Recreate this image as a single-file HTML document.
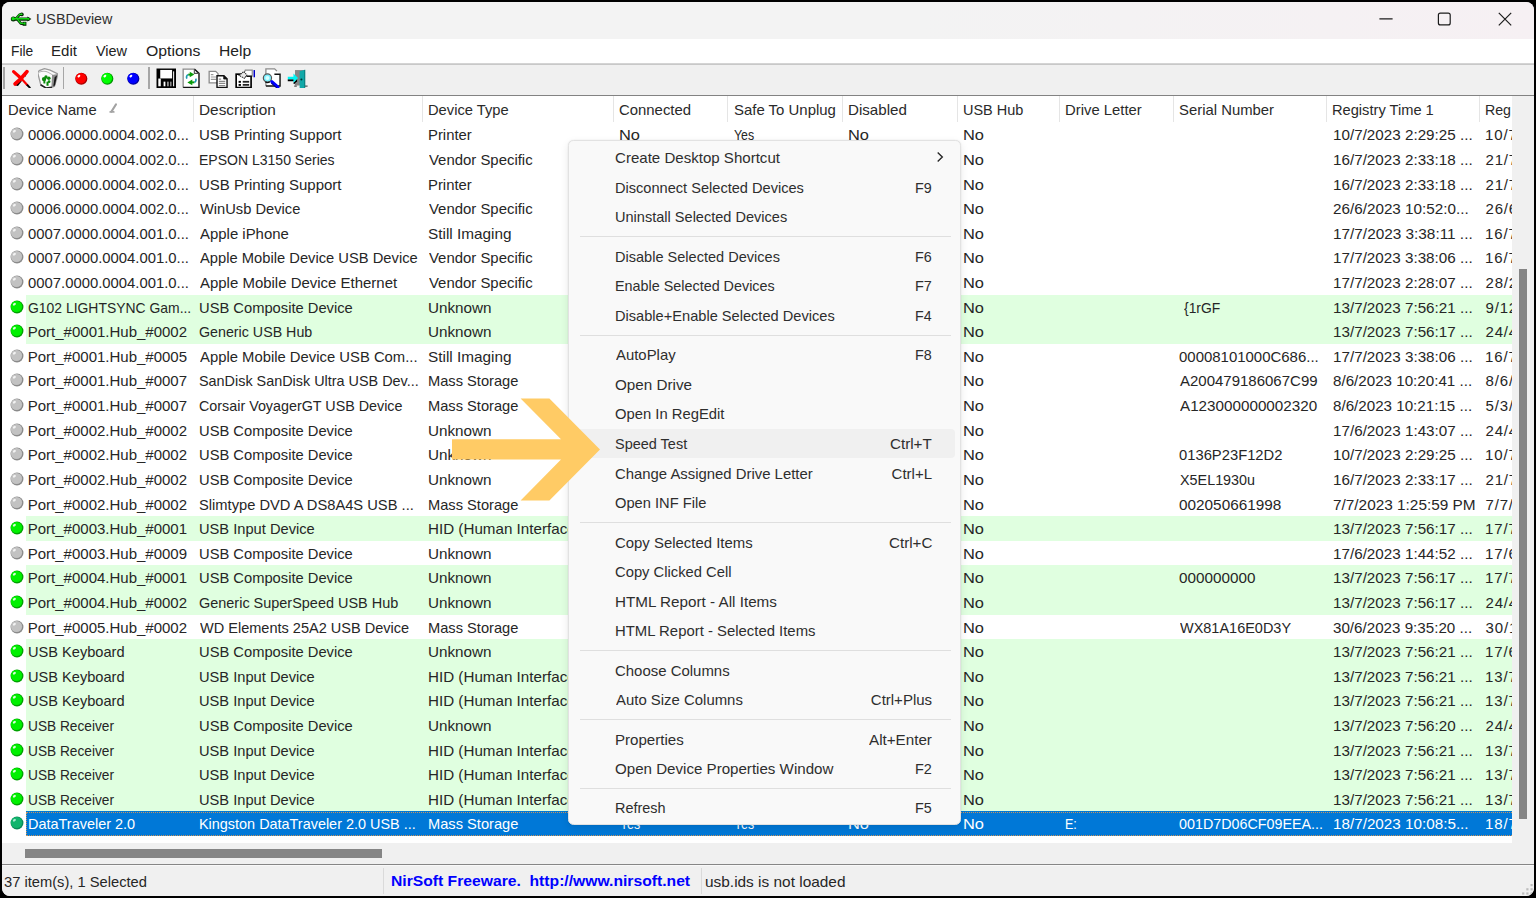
<!DOCTYPE html>
<html lang="en"><head><meta charset="utf-8"><title>USBDeview</title>
<style>
*{box-sizing:border-box;margin:0;padding:0}
html,body{width:1536px;height:898px;overflow:hidden;background:#000}
body{font-family:"Liberation Sans",sans-serif;font-size:15px;color:#262626;position:relative}
#win{position:absolute;left:1.8px;top:1.8px;width:1532.6px;height:894.3px;border-radius:8px;background:#f0f0f0;overflow:hidden}
#o{position:absolute;left:-1.8px;top:-1.8px;width:1536px;height:898px}
#o div,#o svg{position:absolute}
.t{line-height:18px;white-space:pre;transform-origin:0 0}
#title{left:0;top:0;width:1536px;height:38.8px;background:linear-gradient(90deg,#f3f3f3 0%,#f3f3f3 60%,#f6f0f3 100%);border-top:1.2px solid #fbfbfb}
#menubar{left:0;top:38.8px;width:1536px;height:24.6px;background:#fff}
#tbtop{left:0;top:63.2px;width:1536px;height:1.8px;background:linear-gradient(#dadada,#c2c2c2)}
#toolbar{left:0;top:65px;width:1536px;height:29.6px;background:#f0f0f0}
#tbbot{left:0;top:94.6px;width:1536px;height:1.6px;background:#828282}
.tsep{top:67.2px;width:1.6px;height:21.4px;background:#a6a6a6}
#list{left:2px;top:96.2px;width:1510px;height:746.5px;background:#fff;overflow:hidden}
#lo{left:-2px;top:-96.2px;width:1536px;height:898px}
.hs{top:96.2px;width:1px;height:26px;background:#e5e5e5}
.bg{left:26.3px;width:1486px;height:24.61px}
.g{background:#e0ffe0}
.s{background:#0078d7}
.w{color:#fff}
.dot{left:9.5px;width:14px;height:14px}
#vs{left:1512px;top:96.2px;width:22.4px;height:746.5px;background:#f0f0f0}
#vt{left:1518.8px;top:269.3px;width:8.7px;height:549.6px;background:#858585}
#hsb{left:0;top:842.7px;width:1536px;height:21.5px;background:#f0f0f0}
#ht{left:24.8px;top:848.7px;width:357.6px;height:9px;background:#858585}
#stl{left:0;top:864.1px;width:1536px;height:1.3px;background:#868686}
#status{left:0;top:865.4px;width:1536px;height:32px;background:#f0f0f0;border-top:1px solid #f9f9f9}
.sb{top:867.5px;width:1px;height:26.5px;background:#dadada}
#menu{left:568.2px;top:139.9px;width:393.2px;height:685px;background:#f9f9f9;border:1.4px solid #e2e2e2;border-radius:5.5px;box-shadow:0 3px 8px rgba(0,0,0,.09),0 0 1.5px rgba(0,0,0,.10)}
.ms{left:579.5px;width:371.5px;height:1px;background:#dfdfdf}
#hl{left:575px;top:428.9px;width:380.3px;height:29.3px;border-radius:4px;background:#f0f0f0}
.m{color:#2e2e2e}
</style></head><body>
<div id="win"><div id="o">

<div id="title"></div>
<svg style="left:10px;top:11px" width="22" height="16" viewBox="10 11 22 16"><g fill="none" stroke="#042a04" stroke-linecap="round" stroke-linejoin="round"><path d="M13 19.1H28.5" stroke-width="3.3"/><path d="M16 18.6L19.6 14.6H21.4" stroke-width="2.6"/><path d="M17.6 19.6L21 23.7H23.4" stroke-width="2.6"/></g><circle cx="13.3" cy="19" r="2.5" fill="#042a04"/><circle cx="21.8" cy="14.4" r="1.9" fill="#042a04"/><rect x="22.6" y="21.8" width="3.8" height="4" fill="#042a04"/><path d="M27.4 16.6L31.4 19L27.4 21.4Z" fill="#042a04"/><g fill="none" stroke="#12d812" stroke-linecap="round" stroke-linejoin="round"><path d="M13 18.8H28" stroke-width="1.5"/><path d="M16 18.4L19.6 14.4H21.2" stroke-width="1.2"/><path d="M17.6 19.4L21 23.5H23.2" stroke-width="1.2"/></g><circle cx="13.1" cy="18.7" r="1.6" fill="#12e012"/><circle cx="21.7" cy="14.3" r=".8" fill="#30f030"/><rect x="23.6" y="22.4" width="2" height="2.2" fill="#12d812"/><path d="M27.8 17.8L30.2 18.9L27.8 20Z" fill="#12e012"/></svg>
<div class="t" style="left:35.50px;top:10.10px;transform:scaleX(0.9544);color:#303030;">USBDeview</div>
<svg style="left:1370px;top:6px" width="150" height="26" viewBox="1370 6 150 26"><g fill="none" stroke="#1c1c1c" stroke-width="1.2"><path d="M1379.4 18.8H1392.6"/><rect x="1438.4" y="13.1" width="11.8" height="11.8" rx="2"/><path d="M1498.8 12.9L1511.2 25.3M1511.2 12.9L1498.8 25.3"/></g></svg>
<div id="menubar"></div>
<div class="t" style="left:10.95px;top:42.00px;transform:scaleX(0.9193);color:#222;">File</div>
<div class="t" style="left:51.45px;top:42.00px;transform:scaleX(1.0041);color:#222;">Edit</div>
<div class="t" style="left:96.25px;top:42.00px;transform:scaleX(0.9627);color:#222;">View</div>
<div class="t" style="left:146.11px;top:42.00px;transform:scaleX(1.0515);color:#222;">Options</div>
<div class="t" style="left:218.80px;top:42.00px;transform:scaleX(1.0448);color:#222;">Help</div>
<div id="tbtop"></div><div id="toolbar"></div><div id="tbbot"></div>
<div class="tsep" style="left:3.2px"></div>
<div class="tsep" style="left:62.8px"></div>
<div class="tsep" style="left:148.2px"></div>
<svg style="left:11.4px;top:67.6px" width="20.6" height="20.6" viewBox="0 0 16 16"><path d="M6.4 9.2L3 13.4L5.4 14L8.6 10Z" fill="#000"/><path d="M12.6 3L10.4 6L11.4 6.8Z" fill="#000"/><path d="M2 2.8L8.2 8.4" stroke="#ff0000" stroke-width="2.5" fill="none" stroke-linecap="round"/><path d="M8.2 8.4L12.6 13.2" stroke="#ff0000" stroke-width="1.7" fill="none" stroke-linecap="round"/><path d="M12.4 2.8L7.6 8.4L3.2 12.4" stroke="#ff0000" stroke-width="2.9" fill="none" stroke-linecap="round" stroke-linejoin="round"/><path d="M12.8 13.4L14.6 15.2" stroke="#000" stroke-width="1.5" stroke-linecap="round"/></svg><svg style="left:37.7px;top:67.6px" width="20.6" height="20.6" viewBox="0 0 16 16"><path d="M-.2 3.6L1 2L5 .5L9.4 1.6L15.4 4.6L14.6 8L12.8 14.2L10.6 15L6.4 15.7L2.2 13.2L.6 7Z" fill="#fcfcfc" stroke="#9a9a9a" stroke-width="1"/><path d="M.4 3.4Q5 1.6 8 3.4T11.4 5.4" fill="none" stroke="#b4b4b4" stroke-width=".8"/><path d="M10.9 5.4L15.3 4.7L12.9 14.2L10.4 15.1Z" fill="#8e8e8e"/><path d="M12.9 7.2L14.8 5.6L13.2 13.4L11.9 14.4Z" fill="#161616"/><path d="M2 13L6.4 15.6L10.8 14.9" fill="none" stroke="#222" stroke-width="1.2"/><g fill="#0c8c0c"><circle cx="4.7" cy="8.6" r="1.7"/><circle cx="6.2" cy="7" r="1.3"/><circle cx="8.4" cy="8" r="1.4"/><circle cx="8.6" cy="10.6" r="1.1"/><path d="M4.2 9.4H5.7V12H4.2Z"/><path d="M6.6 10.6H8.2V13.8H6.6Z"/></g></svg><svg style="left:70.9px;top:67.6px" width="20.6" height="20.6" viewBox="0 0 16 16"><g transform="translate(2.9 3.2) scale(.73)"><circle cx="7" cy="7" r="6.45" fill="#a80000"/><circle cx="6.5" cy="6.5" r="5.6" fill="#ff0000"/><ellipse cx="4.4" cy="4.2" rx="1.7" ry="1.15" transform="rotate(-38 4.4 4.2)" fill="#ffffff"/></g></svg><svg style="left:97.1px;top:67.6px" width="20.6" height="20.6" viewBox="0 0 16 16"><g transform="translate(2.9 3.2) scale(.73)"><circle cx="7" cy="7" r="6.45" fill="#009800"/><circle cx="6.5" cy="6.5" r="5.6" fill="#00ff00"/><ellipse cx="4.4" cy="4.2" rx="1.7" ry="1.15" transform="rotate(-38 4.4 4.2)" fill="#ffffff"/></g></svg><svg style="left:123.4px;top:67.6px" width="20.6" height="20.6" viewBox="0 0 16 16"><g transform="translate(2.9 3.2) scale(.73)"><circle cx="7" cy="7" r="6.45" fill="#0000a0"/><circle cx="6.5" cy="6.5" r="5.6" fill="#0000ff"/><ellipse cx="4.4" cy="4.2" rx="1.7" ry="1.15" transform="rotate(-38 4.4 4.2)" fill="#ffffff"/></g></svg><svg style="left:155.8px;top:67.6px" width="20.6" height="20.6" viewBox="0 0 16 16"><rect x=".4" y=".4" width="15.2" height="15.2" fill="#000"/><rect x="3.3" y="1.5" width="9.2" height="6.6" fill="#fff"/><rect x="1.8" y="8.2" width="1.9" height="6" fill="#fff"/><rect x="1.8" y="1.8" width=".9" height="6" fill="#fff" opacity=".0"/><rect x="13.3" y="2.6" width=".8" height="11.6" fill="#fff"/><rect x="5.9" y="10.6" width="1.4" height="3.6" fill="#fff"/><rect x="8.6" y="10.6" width="1.3" height="3.6" fill="#9a9a9a"/><rect x="10.9" y="10.6" width="1.2" height="3.6" fill="#8a8a8a"/></svg><svg style="left:182.1px;top:67.6px" width="20.6" height="20.6" viewBox="0 0 16 16"><path d="M.9.8H9.6L13.2 4.2V15.2H.9Z" fill="#fff"/><path d="M.9 15.2V.8H9.6" fill="none" stroke="#8a8a8a" stroke-width="1"/><path d="M9.6.8L13.2 4.2V15.2H.9" fill="none" stroke="#111" stroke-width="1.1"/><path d="M9.6 1V4.2H13" fill="none" stroke="#555" stroke-width=".9"/><path d="M6 3V7.2L9.6 5.1Z" fill="#0a9a0a"/><rect x="4.8" y="4.4" width="1.8" height="1.5" fill="#0a9a0a"/><path d="M8 9V13.4L4.2 11.2Z" fill="#0a9a0a"/><rect x="7.8" y="10.4" width="1.8" height="1.5" fill="#0a9a0a"/><path d="M4.8 5.2C3.6 5.6 3.2 7 3.8 8.2" fill="none" stroke="#1a9ab0" stroke-width="1.3"/><path d="M9.6 11.2C10.8 10.8 11.2 9.4 10.6 8.2" fill="none" stroke="#1a9ab0" stroke-width="1.3"/></svg><svg style="left:208.4px;top:67.6px" width="20.6" height="20.6" viewBox="0 0 16 16"><path d="M.9 2.6H6L7.8 4.4V11.6H.9Z" fill="#fff" stroke="#8a8a8a" stroke-width="1"/><path d="M2.2 5.2H4.2M2.2 7H6.4M2.2 8.8H6.4" stroke="#9a9a9a" stroke-width=".9"/><path d="M7 6H12.4L14.8 8.4V15.2H7Z" fill="#fff" stroke="#111" stroke-width="1.1"/><path d="M12.2 6V8.6H14.8" fill="#111" stroke="#111" stroke-width=".6"/><path d="M8.4 8.6H10.2M8.4 10.4H13.4M8.4 12H13.4M8.4 13.6H13.4" stroke="#8a8a8a" stroke-width=".9"/></svg><svg style="left:234.7px;top:67.6px" width="20.6" height="20.6" viewBox="0 0 16 16"><rect x=".9" y="4.8" width="11.6" height="10.4" fill="#fff" stroke="#000" stroke-width="1.3"/><path d="M8 1.6H13.4V6.4H9L7 4.4Z" fill="#fff" stroke="#8a8a8a" stroke-width=".9"/><path d="M3.2 5.8L6.8 2.8L9.2 5.4L7.4 8Z" fill="#e8e8e8" stroke="#222" stroke-width=".8" stroke-dasharray="1 .6"/><path d="M9 6.4H13.2" stroke="#111" stroke-width="1"/><rect x="14.4" y="1.6" width="1.2" height="5.6" fill="#0000c8"/><rect x="2.8" y="10" width="1.8" height="1.5" fill="#000"/><rect x="2.8" y="12.4" width="1.8" height="1.5" fill="#000"/><rect x="6" y="10" width="5" height="1.4" fill="#222"/><rect x="6" y="12.4" width="5" height="1.4" fill="#222"/></svg><svg style="left:261.0px;top:67.6px" width="20.6" height="20.6" viewBox="0 0 16 16"><path d="M3.8.6H10.6L14.8 4.6V14H3.8Z" fill="#fff"/><path d="M3.8 14V.6H10.6L12.4 2.4" fill="none" stroke="#8a8a8a" stroke-width="1"/><path d="M10.4 4.8H14.8V14H3.8" fill="none" stroke="#111" stroke-width="1.1"/><circle cx="5" cy="7.8" r="3.2" fill="#7af0ff" stroke="#555" stroke-width=".9"/><circle cx="5" cy="7.8" r="1.6" fill="#d8ffff"/><path d="M3.4 10.8Q5 11.8 6.8 10.8" fill="none" stroke="#111" stroke-width="1"/><path d="M8.4 10.6L13.2 14.8" stroke="#0000ff" stroke-width="2.4" stroke-linecap="round"/><path d="M8 11.8L12.4 15.6" stroke="#000080" stroke-width=".8"/></svg><svg style="left:287.3px;top:67.6px" width="20.6" height="20.6" viewBox="0 0 16 16"><rect x="6.2" y="1.6" width="7.4" height="12" fill="#868686"/><path d="M5.6 14H7.6M12.8 14H16" stroke="#555" stroke-width="1"/><path d="M9.8 2.6L14 1.4V15.6L9.8 15.6Z" fill="#11a8a8"/><path d="M13.4 1.6L14.2 1.4V15.4L13.4 15.4Z" fill="#0a7a7a"/><circle cx="11.2" cy="9" r=".8" fill="#033"/><path d="M.6 8.8H6V10.2H.6Z" fill="#000"/><path d="M4.8 11.6L7.8 8.6V10.2L5.6 12.6Z" fill="#000"/><path d="M.6 6.8H5V4.2L8.6 7.8L5 11.4V8.8H.6Z" fill="#00f4f4"/></svg>
<div id="list"><div id="lo">
<div class="t" style="left:7.77px;top:101.00px;transform:scaleX(0.9841);color:#2a2a2a;">Device Name</div>
<div class="t" style="left:198.82px;top:101.00px;transform:scaleX(1.0247);color:#2a2a2a;">Description</div>
<div class="hs" style="left:192.6px"></div>
<div class="t" style="left:427.77px;top:101.00px;transform:scaleX(0.9801);color:#2a2a2a;">Device Type</div>
<div class="hs" style="left:421.7px"></div>
<div class="t" style="left:619.35px;top:101.00px;transform:scaleX(0.9929);color:#2a2a2a;">Connected</div>
<div class="hs" style="left:613.2px"></div>
<div class="t" style="left:733.85px;top:101.00px;transform:scaleX(0.9960);color:#2a2a2a;">Safe To Unplug</div>
<div class="hs" style="left:726.7px"></div>
<div class="t" style="left:848.34px;top:101.00px;transform:scaleX(1.0089);color:#2a2a2a;">Disabled</div>
<div class="hs" style="left:842.4px"></div>
<div class="t" style="left:963.09px;top:101.00px;transform:scaleX(0.9655);color:#2a2a2a;">USB Hub</div>
<div class="hs" style="left:957.0px"></div>
<div class="t" style="left:1064.66px;top:101.00px;transform:scaleX(0.9895);color:#2a2a2a;">Drive Letter</div>
<div class="hs" style="left:1058.7px"></div>
<div class="t" style="left:1179.26px;top:101.00px;transform:scaleX(0.9916);color:#2a2a2a;">Serial Number</div>
<div class="hs" style="left:1173.2px"></div>
<div class="t" style="left:1332.28px;top:101.00px;transform:scaleX(0.9765);color:#2a2a2a;">Registry Time 1</div>
<div class="hs" style="left:1325.8px"></div>
<div class="t" style="left:1484.82px;top:101.00px;transform:scaleX(0.9449);color:#2a2a2a;">Reg</div>
<div class="hs" style="left:1479.0px"></div>
<svg style="left:108px;top:102px" width="12" height="13" viewBox="108 102 12 13"><path d="M116 104.4L111.4 111.6" stroke="#a2a2a2" stroke-width="2" fill="none" stroke-linecap="round"/><path d="M110.2 111.9H113.8" stroke="#a4a4a4" stroke-width="1.7" fill="none" stroke-linecap="round"/></svg>
<svg class="dot" style="top:127.30px" viewBox="0 0 14 14"><circle cx="7" cy="7" r="6.45" fill="#8a8a8a"/><circle cx="6.5" cy="6.5" r="5.6" fill="#c2c2c2"/><ellipse cx="4.4" cy="4.2" rx="1.7" ry="1.15" transform="rotate(-38 4.4 4.2)" fill="#f2f2f2"/></svg>
<div class="t" style="left:28.36px;top:126.35px;transform:scaleX(0.9894);">0006.0000.0004.002.0...</div>
<div class="t" style="left:198.95px;top:126.35px;">USB Printing Support</div>
<div class="t" style="left:427.76px;top:126.35px;transform:scaleX(0.9907);">Printer</div>
<div class="t" style="left:618.74px;top:126.35px;transform:scaleX(1.0925);">No</div>
<div class="t" style="left:734.30px;top:126.35px;transform:scaleX(0.8228);">Yes</div>
<div class="t" style="left:848.24px;top:126.35px;transform:scaleX(1.0925);">No</div>
<div class="t" style="left:962.84px;top:126.35px;transform:scaleX(1.0925);">No</div>
<div class="t" style="left:1332.53px;top:126.35px;transform:scaleX(1.0148);">10/7/2023 2:29:25 ...</div>
<div class="t" style="left:1485.05px;top:126.35px;letter-spacing:.85px;">10/7/2</div>
<svg class="dot" style="top:151.91px" viewBox="0 0 14 14"><circle cx="7" cy="7" r="6.45" fill="#8a8a8a"/><circle cx="6.5" cy="6.5" r="5.6" fill="#c2c2c2"/><ellipse cx="4.4" cy="4.2" rx="1.7" ry="1.15" transform="rotate(-38 4.4 4.2)" fill="#f2f2f2"/></svg>
<div class="t" style="left:28.36px;top:150.96px;transform:scaleX(0.9894);">0006.0000.0004.002.0...</div>
<div class="t" style="left:198.93px;top:150.96px;transform:scaleX(0.9344);">EPSON L3150 Series</div>
<div class="t" style="left:428.85px;top:150.96px;transform:scaleX(0.9942);">Vendor Specific</div>
<div class="t" style="left:618.74px;top:150.96px;transform:scaleX(1.0925);">No</div>
<div class="t" style="left:734.30px;top:150.96px;transform:scaleX(0.8228);">Yes</div>
<div class="t" style="left:848.24px;top:150.96px;transform:scaleX(1.0925);">No</div>
<div class="t" style="left:962.84px;top:150.96px;transform:scaleX(1.0925);">No</div>
<div class="t" style="left:1332.53px;top:150.96px;transform:scaleX(1.0148);">16/7/2023 2:33:18 ...</div>
<div class="t" style="left:1485.45px;top:150.96px;letter-spacing:.85px;">21/7/2</div>
<svg class="dot" style="top:176.52px" viewBox="0 0 14 14"><circle cx="7" cy="7" r="6.45" fill="#8a8a8a"/><circle cx="6.5" cy="6.5" r="5.6" fill="#c2c2c2"/><ellipse cx="4.4" cy="4.2" rx="1.7" ry="1.15" transform="rotate(-38 4.4 4.2)" fill="#f2f2f2"/></svg>
<div class="t" style="left:28.36px;top:175.57px;transform:scaleX(0.9894);">0006.0000.0004.002.0...</div>
<div class="t" style="left:198.95px;top:175.57px;">USB Printing Support</div>
<div class="t" style="left:427.76px;top:175.57px;transform:scaleX(0.9907);">Printer</div>
<div class="t" style="left:618.74px;top:175.57px;transform:scaleX(1.0925);">No</div>
<div class="t" style="left:734.30px;top:175.57px;transform:scaleX(0.8228);">Yes</div>
<div class="t" style="left:848.24px;top:175.57px;transform:scaleX(1.0925);">No</div>
<div class="t" style="left:962.84px;top:175.57px;transform:scaleX(1.0925);">No</div>
<div class="t" style="left:1332.53px;top:175.57px;transform:scaleX(1.0148);">16/7/2023 2:33:18 ...</div>
<div class="t" style="left:1485.45px;top:175.57px;letter-spacing:.85px;">21/7/2</div>
<svg class="dot" style="top:201.13px" viewBox="0 0 14 14"><circle cx="7" cy="7" r="6.45" fill="#8a8a8a"/><circle cx="6.5" cy="6.5" r="5.6" fill="#c2c2c2"/><ellipse cx="4.4" cy="4.2" rx="1.7" ry="1.15" transform="rotate(-38 4.4 4.2)" fill="#f2f2f2"/></svg>
<div class="t" style="left:28.36px;top:200.18px;transform:scaleX(0.9894);">0006.0000.0004.002.0...</div>
<div class="t" style="left:199.95px;top:200.18px;transform:scaleX(0.9784);">WinUsb Device</div>
<div class="t" style="left:428.85px;top:200.18px;transform:scaleX(0.9942);">Vendor Specific</div>
<div class="t" style="left:618.74px;top:200.18px;transform:scaleX(1.0925);">No</div>
<div class="t" style="left:734.30px;top:200.18px;transform:scaleX(0.8228);">Yes</div>
<div class="t" style="left:848.24px;top:200.18px;transform:scaleX(1.0925);">No</div>
<div class="t" style="left:962.84px;top:200.18px;transform:scaleX(1.0925);">No</div>
<div class="t" style="left:1332.94px;top:200.18px;transform:scaleX(1.0167);">26/6/2023 10:52:0...</div>
<div class="t" style="left:1485.45px;top:200.18px;letter-spacing:.85px;">26/6/2</div>
<svg class="dot" style="top:225.74px" viewBox="0 0 14 14"><circle cx="7" cy="7" r="6.45" fill="#8a8a8a"/><circle cx="6.5" cy="6.5" r="5.6" fill="#c2c2c2"/><ellipse cx="4.4" cy="4.2" rx="1.7" ry="1.15" transform="rotate(-38 4.4 4.2)" fill="#f2f2f2"/></svg>
<div class="t" style="left:28.36px;top:224.79px;transform:scaleX(0.9894);">0007.0000.0004.001.0...</div>
<div class="t" style="left:200.05px;top:224.79px;transform:scaleX(0.9955);">Apple iPhone</div>
<div class="t" style="left:428.23px;top:224.79px;transform:scaleX(1.0225);">Still Imaging</div>
<div class="t" style="left:618.74px;top:224.79px;transform:scaleX(1.0925);">No</div>
<div class="t" style="left:734.30px;top:224.79px;transform:scaleX(0.8228);">Yes</div>
<div class="t" style="left:848.24px;top:224.79px;transform:scaleX(1.0925);">No</div>
<div class="t" style="left:962.84px;top:224.79px;transform:scaleX(1.0925);">No</div>
<div class="t" style="left:1332.52px;top:224.79px;transform:scaleX(1.0231);">17/7/2023 3:38:11 ...</div>
<div class="t" style="left:1485.05px;top:224.79px;letter-spacing:.85px;">16/7/2</div>
<svg class="dot" style="top:250.35px" viewBox="0 0 14 14"><circle cx="7" cy="7" r="6.45" fill="#8a8a8a"/><circle cx="6.5" cy="6.5" r="5.6" fill="#c2c2c2"/><ellipse cx="4.4" cy="4.2" rx="1.7" ry="1.15" transform="rotate(-38 4.4 4.2)" fill="#f2f2f2"/></svg>
<div class="t" style="left:28.36px;top:249.40px;transform:scaleX(0.9894);">0007.0000.0004.001.0...</div>
<div class="t" style="left:200.05px;top:249.40px;transform:scaleX(0.9819);">Apple Mobile Device USB Device</div>
<div class="t" style="left:428.85px;top:249.40px;transform:scaleX(0.9942);">Vendor Specific</div>
<div class="t" style="left:618.74px;top:249.40px;transform:scaleX(1.0925);">No</div>
<div class="t" style="left:734.30px;top:249.40px;transform:scaleX(0.8228);">Yes</div>
<div class="t" style="left:848.24px;top:249.40px;transform:scaleX(1.0925);">No</div>
<div class="t" style="left:962.84px;top:249.40px;transform:scaleX(1.0925);">No</div>
<div class="t" style="left:1332.53px;top:249.40px;transform:scaleX(1.0148);">17/7/2023 3:38:06 ...</div>
<div class="t" style="left:1485.05px;top:249.40px;letter-spacing:.85px;">16/7/2</div>
<svg class="dot" style="top:274.96px" viewBox="0 0 14 14"><circle cx="7" cy="7" r="6.45" fill="#8a8a8a"/><circle cx="6.5" cy="6.5" r="5.6" fill="#c2c2c2"/><ellipse cx="4.4" cy="4.2" rx="1.7" ry="1.15" transform="rotate(-38 4.4 4.2)" fill="#f2f2f2"/></svg>
<div class="t" style="left:28.36px;top:274.01px;transform:scaleX(0.9894);">0007.0000.0004.001.0...</div>
<div class="t" style="left:200.05px;top:274.01px;transform:scaleX(0.9975);">Apple Mobile Device Ethernet</div>
<div class="t" style="left:428.85px;top:274.01px;transform:scaleX(0.9942);">Vendor Specific</div>
<div class="t" style="left:618.74px;top:274.01px;transform:scaleX(1.0925);">No</div>
<div class="t" style="left:734.30px;top:274.01px;transform:scaleX(0.8228);">Yes</div>
<div class="t" style="left:848.24px;top:274.01px;transform:scaleX(1.0925);">No</div>
<div class="t" style="left:962.84px;top:274.01px;transform:scaleX(1.0925);">No</div>
<div class="t" style="left:1332.53px;top:274.01px;transform:scaleX(1.0148);">17/7/2023 2:28:07 ...</div>
<div class="t" style="left:1485.45px;top:274.01px;letter-spacing:.85px;">28/2/2</div>
<div class="bg g" style="top:294.62px"></div>
<svg class="dot" style="top:299.57px" viewBox="0 0 14 14"><circle cx="7" cy="7" r="6.45" fill="#00a000"/><circle cx="6.5" cy="6.5" r="5.6" fill="#00f000"/><ellipse cx="4.4" cy="4.2" rx="1.7" ry="1.15" transform="rotate(-38 4.4 4.2)" fill="#d8ffd8"/></svg>
<div class="t" style="left:28.30px;top:298.62px;transform:scaleX(0.9281);">G102 LIGHTSYNC Gam...</div>
<div class="t" style="left:198.97px;top:298.62px;transform:scaleX(0.9813);">USB Composite Device</div>
<div class="t" style="left:427.83px;top:298.62px;transform:scaleX(1.0165);">Unknown</div>
<div class="t" style="left:619.80px;top:298.62px;transform:scaleX(0.8228);">Yes</div>
<div class="t" style="left:734.30px;top:298.62px;transform:scaleX(0.8228);">Yes</div>
<div class="t" style="left:848.24px;top:298.62px;transform:scaleX(1.0925);">No</div>
<div class="t" style="left:962.84px;top:298.62px;transform:scaleX(1.0925);">No</div>
<div class="t" style="left:1183.67px;top:298.62px;transform:scaleX(0.9245);">{1rGF</div>
<div class="t" style="left:1332.53px;top:298.62px;transform:scaleX(1.0148);">13/7/2023 7:56:21 ...</div>
<div class="t" style="left:1485.45px;top:298.62px;letter-spacing:.85px;">9/12/2</div>
<div class="bg g" style="top:319.23px"></div>
<svg class="dot" style="top:324.18px" viewBox="0 0 14 14"><circle cx="7" cy="7" r="6.45" fill="#00a000"/><circle cx="6.5" cy="6.5" r="5.6" fill="#00f000"/><ellipse cx="4.4" cy="4.2" rx="1.7" ry="1.15" transform="rotate(-38 4.4 4.2)" fill="#d8ffd8"/></svg>
<div class="t" style="left:27.75px;top:323.23px;">Port_#0001.Hub_#0002</div>
<div class="t" style="left:199.39px;top:323.23px;transform:scaleX(0.9500);">Generic USB Hub</div>
<div class="t" style="left:427.83px;top:323.23px;transform:scaleX(1.0165);">Unknown</div>
<div class="t" style="left:619.80px;top:323.23px;transform:scaleX(0.8228);">Yes</div>
<div class="t" style="left:734.30px;top:323.23px;transform:scaleX(0.8228);">Yes</div>
<div class="t" style="left:848.24px;top:323.23px;transform:scaleX(1.0925);">No</div>
<div class="t" style="left:962.84px;top:323.23px;transform:scaleX(1.0925);">No</div>
<div class="t" style="left:1332.53px;top:323.23px;transform:scaleX(1.0148);">13/7/2023 7:56:17 ...</div>
<div class="t" style="left:1485.45px;top:323.23px;letter-spacing:.85px;">24/4/2</div>
<svg class="dot" style="top:348.79px" viewBox="0 0 14 14"><circle cx="7" cy="7" r="6.45" fill="#8a8a8a"/><circle cx="6.5" cy="6.5" r="5.6" fill="#c2c2c2"/><ellipse cx="4.4" cy="4.2" rx="1.7" ry="1.15" transform="rotate(-38 4.4 4.2)" fill="#f2f2f2"/></svg>
<div class="t" style="left:27.75px;top:347.84px;">Port_#0001.Hub_#0005</div>
<div class="t" style="left:200.05px;top:347.84px;transform:scaleX(0.9886);">Apple Mobile Device USB Com...</div>
<div class="t" style="left:428.23px;top:347.84px;transform:scaleX(1.0225);">Still Imaging</div>
<div class="t" style="left:618.74px;top:347.84px;transform:scaleX(1.0925);">No</div>
<div class="t" style="left:734.30px;top:347.84px;transform:scaleX(0.8228);">Yes</div>
<div class="t" style="left:848.24px;top:347.84px;transform:scaleX(1.0925);">No</div>
<div class="t" style="left:962.84px;top:347.84px;transform:scaleX(1.0925);">No</div>
<div class="t" style="left:1179.35px;top:347.84px;transform:scaleX(0.9971);">00008101000C686...</div>
<div class="t" style="left:1332.53px;top:347.84px;transform:scaleX(1.0148);">17/7/2023 3:38:06 ...</div>
<div class="t" style="left:1485.05px;top:347.84px;letter-spacing:.85px;">16/7/2</div>
<svg class="dot" style="top:373.40px" viewBox="0 0 14 14"><circle cx="7" cy="7" r="6.45" fill="#8a8a8a"/><circle cx="6.5" cy="6.5" r="5.6" fill="#c2c2c2"/><ellipse cx="4.4" cy="4.2" rx="1.7" ry="1.15" transform="rotate(-38 4.4 4.2)" fill="#f2f2f2"/></svg>
<div class="t" style="left:27.75px;top:372.45px;">Port_#0001.Hub_#0007</div>
<div class="t" style="left:199.38px;top:372.45px;transform:scaleX(0.9595);">SanDisk SanDisk Ultra USB Dev...</div>
<div class="t" style="left:427.78px;top:372.45px;transform:scaleX(0.9768);">Mass Storage</div>
<div class="t" style="left:618.74px;top:372.45px;transform:scaleX(1.0925);">No</div>
<div class="t" style="left:734.30px;top:372.45px;transform:scaleX(0.8228);">Yes</div>
<div class="t" style="left:848.24px;top:372.45px;transform:scaleX(1.0925);">No</div>
<div class="t" style="left:962.84px;top:372.45px;transform:scaleX(1.0925);">No</div>
<div class="t" style="left:1179.95px;top:372.45px;">A200479186067C99</div>
<div class="t" style="left:1333.04px;top:372.45px;transform:scaleX(1.0111);">8/6/2023 10:20:41 ...</div>
<div class="t" style="left:1485.55px;top:372.45px;letter-spacing:.85px;">8/6/2</div>
<svg class="dot" style="top:398.01px" viewBox="0 0 14 14"><circle cx="7" cy="7" r="6.45" fill="#8a8a8a"/><circle cx="6.5" cy="6.5" r="5.6" fill="#c2c2c2"/><ellipse cx="4.4" cy="4.2" rx="1.7" ry="1.15" transform="rotate(-38 4.4 4.2)" fill="#f2f2f2"/></svg>
<div class="t" style="left:27.75px;top:397.06px;">Port_#0001.Hub_#0007</div>
<div class="t" style="left:199.38px;top:397.06px;transform:scaleX(0.9547);">Corsair VoyagerGT USB Device</div>
<div class="t" style="left:427.78px;top:397.06px;transform:scaleX(0.9768);">Mass Storage</div>
<div class="t" style="left:618.74px;top:397.06px;transform:scaleX(1.0925);">No</div>
<div class="t" style="left:734.30px;top:397.06px;transform:scaleX(0.8228);">Yes</div>
<div class="t" style="left:848.24px;top:397.06px;transform:scaleX(1.0925);">No</div>
<div class="t" style="left:962.84px;top:397.06px;transform:scaleX(1.0925);">No</div>
<div class="t" style="left:1179.95px;top:397.06px;transform:scaleX(1.0149);">A123000000002320</div>
<div class="t" style="left:1333.04px;top:397.06px;transform:scaleX(1.0111);">8/6/2023 10:21:15 ...</div>
<div class="t" style="left:1485.55px;top:397.06px;letter-spacing:.85px;">5/3/2</div>
<svg class="dot" style="top:422.62px" viewBox="0 0 14 14"><circle cx="7" cy="7" r="6.45" fill="#8a8a8a"/><circle cx="6.5" cy="6.5" r="5.6" fill="#c2c2c2"/><ellipse cx="4.4" cy="4.2" rx="1.7" ry="1.15" transform="rotate(-38 4.4 4.2)" fill="#f2f2f2"/></svg>
<div class="t" style="left:27.75px;top:421.67px;">Port_#0002.Hub_#0002</div>
<div class="t" style="left:198.97px;top:421.67px;transform:scaleX(0.9813);">USB Composite Device</div>
<div class="t" style="left:427.83px;top:421.67px;transform:scaleX(1.0165);">Unknown</div>
<div class="t" style="left:618.74px;top:421.67px;transform:scaleX(1.0925);">No</div>
<div class="t" style="left:734.30px;top:421.67px;transform:scaleX(0.8228);">Yes</div>
<div class="t" style="left:848.24px;top:421.67px;transform:scaleX(1.0925);">No</div>
<div class="t" style="left:962.84px;top:421.67px;transform:scaleX(1.0925);">No</div>
<div class="t" style="left:1332.53px;top:421.67px;transform:scaleX(1.0148);">17/6/2023 1:43:07 ...</div>
<div class="t" style="left:1485.45px;top:421.67px;letter-spacing:.85px;">24/4/2</div>
<svg class="dot" style="top:447.23px" viewBox="0 0 14 14"><circle cx="7" cy="7" r="6.45" fill="#8a8a8a"/><circle cx="6.5" cy="6.5" r="5.6" fill="#c2c2c2"/><ellipse cx="4.4" cy="4.2" rx="1.7" ry="1.15" transform="rotate(-38 4.4 4.2)" fill="#f2f2f2"/></svg>
<div class="t" style="left:27.75px;top:446.28px;">Port_#0002.Hub_#0002</div>
<div class="t" style="left:198.97px;top:446.28px;transform:scaleX(0.9813);">USB Composite Device</div>
<div class="t" style="left:427.83px;top:446.28px;transform:scaleX(1.0165);">Unknown</div>
<div class="t" style="left:618.74px;top:446.28px;transform:scaleX(1.0925);">No</div>
<div class="t" style="left:734.30px;top:446.28px;transform:scaleX(0.8228);">Yes</div>
<div class="t" style="left:848.24px;top:446.28px;transform:scaleX(1.0925);">No</div>
<div class="t" style="left:962.84px;top:446.28px;transform:scaleX(1.0925);">No</div>
<div class="t" style="left:1179.36px;top:446.28px;transform:scaleX(0.9846);">0136P23F12D2</div>
<div class="t" style="left:1332.53px;top:446.28px;transform:scaleX(1.0148);">10/7/2023 2:29:25 ...</div>
<div class="t" style="left:1485.05px;top:446.28px;letter-spacing:.85px;">10/7/2</div>
<svg class="dot" style="top:471.84px" viewBox="0 0 14 14"><circle cx="7" cy="7" r="6.45" fill="#8a8a8a"/><circle cx="6.5" cy="6.5" r="5.6" fill="#c2c2c2"/><ellipse cx="4.4" cy="4.2" rx="1.7" ry="1.15" transform="rotate(-38 4.4 4.2)" fill="#f2f2f2"/></svg>
<div class="t" style="left:27.75px;top:470.89px;">Port_#0002.Hub_#0002</div>
<div class="t" style="left:198.97px;top:470.89px;transform:scaleX(0.9813);">USB Composite Device</div>
<div class="t" style="left:427.83px;top:470.89px;transform:scaleX(1.0165);">Unknown</div>
<div class="t" style="left:618.74px;top:470.89px;transform:scaleX(1.0925);">No</div>
<div class="t" style="left:734.30px;top:470.89px;transform:scaleX(0.8228);">Yes</div>
<div class="t" style="left:848.24px;top:470.89px;transform:scaleX(1.0925);">No</div>
<div class="t" style="left:962.84px;top:470.89px;transform:scaleX(1.0925);">No</div>
<div class="t" style="left:1179.66px;top:470.89px;transform:scaleX(0.9573);">X5EL1930u</div>
<div class="t" style="left:1332.53px;top:470.89px;transform:scaleX(1.0148);">16/7/2023 2:33:17 ...</div>
<div class="t" style="left:1485.45px;top:470.89px;letter-spacing:.85px;">21/7/2</div>
<svg class="dot" style="top:496.45px" viewBox="0 0 14 14"><circle cx="7" cy="7" r="6.45" fill="#8a8a8a"/><circle cx="6.5" cy="6.5" r="5.6" fill="#c2c2c2"/><ellipse cx="4.4" cy="4.2" rx="1.7" ry="1.15" transform="rotate(-38 4.4 4.2)" fill="#f2f2f2"/></svg>
<div class="t" style="left:27.75px;top:495.50px;">Port_#0002.Hub_#0002</div>
<div class="t" style="left:199.36px;top:495.50px;transform:scaleX(0.9797);">Slimtype DVD A DS8A4S USB ...</div>
<div class="t" style="left:427.78px;top:495.50px;transform:scaleX(0.9768);">Mass Storage</div>
<div class="t" style="left:618.74px;top:495.50px;transform:scaleX(1.0925);">No</div>
<div class="t" style="left:734.30px;top:495.50px;transform:scaleX(0.8228);">Yes</div>
<div class="t" style="left:848.24px;top:495.50px;transform:scaleX(1.0925);">No</div>
<div class="t" style="left:962.84px;top:495.50px;transform:scaleX(1.0925);">No</div>
<div class="t" style="left:1179.34px;top:495.50px;transform:scaleX(1.0222);">002050661998</div>
<div class="t" style="left:1332.93px;top:495.50px;transform:scaleX(1.0240);">7/7/2023 1:25:59 PM</div>
<div class="t" style="left:1485.45px;top:495.50px;letter-spacing:.85px;">7/7/2</div>
<div class="bg g" style="top:516.11px"></div>
<svg class="dot" style="top:521.06px" viewBox="0 0 14 14"><circle cx="7" cy="7" r="6.45" fill="#00a000"/><circle cx="6.5" cy="6.5" r="5.6" fill="#00f000"/><ellipse cx="4.4" cy="4.2" rx="1.7" ry="1.15" transform="rotate(-38 4.4 4.2)" fill="#d8ffd8"/></svg>
<div class="t" style="left:27.75px;top:520.11px;">Port_#0003.Hub_#0001</div>
<div class="t" style="left:198.97px;top:520.11px;transform:scaleX(0.9777);">USB Input Device</div>
<div class="t" style="left:427.74px;top:520.11px;transform:scaleX(1.0122);">HID (Human Interface...</div>
<div class="t" style="left:619.80px;top:520.11px;transform:scaleX(0.8228);">Yes</div>
<div class="t" style="left:734.30px;top:520.11px;transform:scaleX(0.8228);">Yes</div>
<div class="t" style="left:848.24px;top:520.11px;transform:scaleX(1.0925);">No</div>
<div class="t" style="left:962.84px;top:520.11px;transform:scaleX(1.0925);">No</div>
<div class="t" style="left:1332.53px;top:520.11px;transform:scaleX(1.0148);">13/7/2023 7:56:17 ...</div>
<div class="t" style="left:1485.05px;top:520.11px;letter-spacing:.85px;">17/7/2</div>
<svg class="dot" style="top:545.67px" viewBox="0 0 14 14"><circle cx="7" cy="7" r="6.45" fill="#8a8a8a"/><circle cx="6.5" cy="6.5" r="5.6" fill="#c2c2c2"/><ellipse cx="4.4" cy="4.2" rx="1.7" ry="1.15" transform="rotate(-38 4.4 4.2)" fill="#f2f2f2"/></svg>
<div class="t" style="left:27.75px;top:544.72px;">Port_#0003.Hub_#0009</div>
<div class="t" style="left:198.97px;top:544.72px;transform:scaleX(0.9813);">USB Composite Device</div>
<div class="t" style="left:427.83px;top:544.72px;transform:scaleX(1.0165);">Unknown</div>
<div class="t" style="left:618.74px;top:544.72px;transform:scaleX(1.0925);">No</div>
<div class="t" style="left:734.30px;top:544.72px;transform:scaleX(0.8228);">Yes</div>
<div class="t" style="left:848.24px;top:544.72px;transform:scaleX(1.0925);">No</div>
<div class="t" style="left:962.84px;top:544.72px;transform:scaleX(1.0925);">No</div>
<div class="t" style="left:1332.53px;top:544.72px;transform:scaleX(1.0148);">17/6/2023 1:44:52 ...</div>
<div class="t" style="left:1485.05px;top:544.72px;letter-spacing:.85px;">17/6/2</div>
<div class="bg g" style="top:565.33px"></div>
<svg class="dot" style="top:570.28px" viewBox="0 0 14 14"><circle cx="7" cy="7" r="6.45" fill="#00a000"/><circle cx="6.5" cy="6.5" r="5.6" fill="#00f000"/><ellipse cx="4.4" cy="4.2" rx="1.7" ry="1.15" transform="rotate(-38 4.4 4.2)" fill="#d8ffd8"/></svg>
<div class="t" style="left:27.75px;top:569.33px;">Port_#0004.Hub_#0001</div>
<div class="t" style="left:198.97px;top:569.33px;transform:scaleX(0.9813);">USB Composite Device</div>
<div class="t" style="left:427.83px;top:569.33px;transform:scaleX(1.0165);">Unknown</div>
<div class="t" style="left:619.80px;top:569.33px;transform:scaleX(0.8228);">Yes</div>
<div class="t" style="left:734.30px;top:569.33px;transform:scaleX(0.8228);">Yes</div>
<div class="t" style="left:848.24px;top:569.33px;transform:scaleX(1.0925);">No</div>
<div class="t" style="left:962.84px;top:569.33px;transform:scaleX(1.0925);">No</div>
<div class="t" style="left:1179.34px;top:569.33px;transform:scaleX(1.0176);">000000000</div>
<div class="t" style="left:1332.53px;top:569.33px;transform:scaleX(1.0148);">13/7/2023 7:56:17 ...</div>
<div class="t" style="left:1485.05px;top:569.33px;letter-spacing:.85px;">17/7/2</div>
<div class="bg g" style="top:589.94px"></div>
<svg class="dot" style="top:594.89px" viewBox="0 0 14 14"><circle cx="7" cy="7" r="6.45" fill="#00a000"/><circle cx="6.5" cy="6.5" r="5.6" fill="#00f000"/><ellipse cx="4.4" cy="4.2" rx="1.7" ry="1.15" transform="rotate(-38 4.4 4.2)" fill="#d8ffd8"/></svg>
<div class="t" style="left:27.75px;top:593.94px;">Port_#0004.Hub_#0002</div>
<div class="t" style="left:199.38px;top:593.94px;transform:scaleX(0.9635);">Generic SuperSpeed USB Hub</div>
<div class="t" style="left:427.83px;top:593.94px;transform:scaleX(1.0165);">Unknown</div>
<div class="t" style="left:619.80px;top:593.94px;transform:scaleX(0.8228);">Yes</div>
<div class="t" style="left:734.30px;top:593.94px;transform:scaleX(0.8228);">Yes</div>
<div class="t" style="left:848.24px;top:593.94px;transform:scaleX(1.0925);">No</div>
<div class="t" style="left:962.84px;top:593.94px;transform:scaleX(1.0925);">No</div>
<div class="t" style="left:1332.53px;top:593.94px;transform:scaleX(1.0148);">13/7/2023 7:56:17 ...</div>
<div class="t" style="left:1485.45px;top:593.94px;letter-spacing:.85px;">24/4/2</div>
<svg class="dot" style="top:619.50px" viewBox="0 0 14 14"><circle cx="7" cy="7" r="6.45" fill="#8a8a8a"/><circle cx="6.5" cy="6.5" r="5.6" fill="#c2c2c2"/><ellipse cx="4.4" cy="4.2" rx="1.7" ry="1.15" transform="rotate(-38 4.4 4.2)" fill="#f2f2f2"/></svg>
<div class="t" style="left:27.75px;top:618.55px;">Port_#0005.Hub_#0002</div>
<div class="t" style="left:199.95px;top:618.55px;transform:scaleX(0.9689);">WD Elements 25A2 USB Device</div>
<div class="t" style="left:427.78px;top:618.55px;transform:scaleX(0.9768);">Mass Storage</div>
<div class="t" style="left:618.74px;top:618.55px;transform:scaleX(1.0925);">No</div>
<div class="t" style="left:734.30px;top:618.55px;transform:scaleX(0.8228);">Yes</div>
<div class="t" style="left:848.24px;top:618.55px;transform:scaleX(1.0925);">No</div>
<div class="t" style="left:962.84px;top:618.55px;transform:scaleX(1.0925);">No</div>
<div class="t" style="left:1179.85px;top:618.55px;transform:scaleX(0.9651);">WX81A16E0D3Y</div>
<div class="t" style="left:1333.04px;top:618.55px;transform:scaleX(1.0111);">30/6/2023 9:35:20 ...</div>
<div class="t" style="left:1485.55px;top:618.55px;letter-spacing:.85px;">30/1/2</div>
<div class="bg g" style="top:639.16px"></div>
<svg class="dot" style="top:644.11px" viewBox="0 0 14 14"><circle cx="7" cy="7" r="6.45" fill="#00a000"/><circle cx="6.5" cy="6.5" r="5.6" fill="#00f000"/><ellipse cx="4.4" cy="4.2" rx="1.7" ry="1.15" transform="rotate(-38 4.4 4.2)" fill="#d8ffd8"/></svg>
<div class="t" style="left:27.88px;top:643.16px;transform:scaleX(0.9733);">USB Keyboard</div>
<div class="t" style="left:198.97px;top:643.16px;transform:scaleX(0.9813);">USB Composite Device</div>
<div class="t" style="left:427.83px;top:643.16px;transform:scaleX(1.0165);">Unknown</div>
<div class="t" style="left:619.80px;top:643.16px;transform:scaleX(0.8228);">Yes</div>
<div class="t" style="left:734.30px;top:643.16px;transform:scaleX(0.8228);">Yes</div>
<div class="t" style="left:848.24px;top:643.16px;transform:scaleX(1.0925);">No</div>
<div class="t" style="left:962.84px;top:643.16px;transform:scaleX(1.0925);">No</div>
<div class="t" style="left:1332.53px;top:643.16px;transform:scaleX(1.0148);">13/7/2023 7:56:21 ...</div>
<div class="t" style="left:1485.05px;top:643.16px;letter-spacing:.85px;">17/6/2</div>
<div class="bg g" style="top:663.77px"></div>
<svg class="dot" style="top:668.72px" viewBox="0 0 14 14"><circle cx="7" cy="7" r="6.45" fill="#00a000"/><circle cx="6.5" cy="6.5" r="5.6" fill="#00f000"/><ellipse cx="4.4" cy="4.2" rx="1.7" ry="1.15" transform="rotate(-38 4.4 4.2)" fill="#d8ffd8"/></svg>
<div class="t" style="left:27.88px;top:667.77px;transform:scaleX(0.9733);">USB Keyboard</div>
<div class="t" style="left:198.97px;top:667.77px;transform:scaleX(0.9777);">USB Input Device</div>
<div class="t" style="left:427.74px;top:667.77px;transform:scaleX(1.0122);">HID (Human Interface...</div>
<div class="t" style="left:619.80px;top:667.77px;transform:scaleX(0.8228);">Yes</div>
<div class="t" style="left:734.30px;top:667.77px;transform:scaleX(0.8228);">Yes</div>
<div class="t" style="left:848.24px;top:667.77px;transform:scaleX(1.0925);">No</div>
<div class="t" style="left:962.84px;top:667.77px;transform:scaleX(1.0925);">No</div>
<div class="t" style="left:1332.53px;top:667.77px;transform:scaleX(1.0148);">13/7/2023 7:56:21 ...</div>
<div class="t" style="left:1485.05px;top:667.77px;letter-spacing:.85px;">13/7/2</div>
<div class="bg g" style="top:688.38px"></div>
<svg class="dot" style="top:693.33px" viewBox="0 0 14 14"><circle cx="7" cy="7" r="6.45" fill="#00a000"/><circle cx="6.5" cy="6.5" r="5.6" fill="#00f000"/><ellipse cx="4.4" cy="4.2" rx="1.7" ry="1.15" transform="rotate(-38 4.4 4.2)" fill="#d8ffd8"/></svg>
<div class="t" style="left:27.88px;top:692.38px;transform:scaleX(0.9733);">USB Keyboard</div>
<div class="t" style="left:198.97px;top:692.38px;transform:scaleX(0.9777);">USB Input Device</div>
<div class="t" style="left:427.74px;top:692.38px;transform:scaleX(1.0122);">HID (Human Interface...</div>
<div class="t" style="left:619.80px;top:692.38px;transform:scaleX(0.8228);">Yes</div>
<div class="t" style="left:734.30px;top:692.38px;transform:scaleX(0.8228);">Yes</div>
<div class="t" style="left:848.24px;top:692.38px;transform:scaleX(1.0925);">No</div>
<div class="t" style="left:962.84px;top:692.38px;transform:scaleX(1.0925);">No</div>
<div class="t" style="left:1332.53px;top:692.38px;transform:scaleX(1.0148);">13/7/2023 7:56:21 ...</div>
<div class="t" style="left:1485.05px;top:692.38px;letter-spacing:.85px;">13/7/2</div>
<div class="bg g" style="top:712.99px"></div>
<svg class="dot" style="top:717.94px" viewBox="0 0 14 14"><circle cx="7" cy="7" r="6.45" fill="#00a000"/><circle cx="6.5" cy="6.5" r="5.6" fill="#00f000"/><ellipse cx="4.4" cy="4.2" rx="1.7" ry="1.15" transform="rotate(-38 4.4 4.2)" fill="#d8ffd8"/></svg>
<div class="t" style="left:27.95px;top:716.99px;transform:scaleX(0.9128);">USB Receiver</div>
<div class="t" style="left:198.97px;top:716.99px;transform:scaleX(0.9813);">USB Composite Device</div>
<div class="t" style="left:427.83px;top:716.99px;transform:scaleX(1.0165);">Unknown</div>
<div class="t" style="left:619.80px;top:716.99px;transform:scaleX(0.8228);">Yes</div>
<div class="t" style="left:734.30px;top:716.99px;transform:scaleX(0.8228);">Yes</div>
<div class="t" style="left:848.24px;top:716.99px;transform:scaleX(1.0925);">No</div>
<div class="t" style="left:962.84px;top:716.99px;transform:scaleX(1.0925);">No</div>
<div class="t" style="left:1332.53px;top:716.99px;transform:scaleX(1.0148);">13/7/2023 7:56:20 ...</div>
<div class="t" style="left:1485.45px;top:716.99px;letter-spacing:.85px;">24/4/2</div>
<div class="bg g" style="top:737.60px"></div>
<svg class="dot" style="top:742.55px" viewBox="0 0 14 14"><circle cx="7" cy="7" r="6.45" fill="#00a000"/><circle cx="6.5" cy="6.5" r="5.6" fill="#00f000"/><ellipse cx="4.4" cy="4.2" rx="1.7" ry="1.15" transform="rotate(-38 4.4 4.2)" fill="#d8ffd8"/></svg>
<div class="t" style="left:27.95px;top:741.60px;transform:scaleX(0.9128);">USB Receiver</div>
<div class="t" style="left:198.97px;top:741.60px;transform:scaleX(0.9777);">USB Input Device</div>
<div class="t" style="left:427.74px;top:741.60px;transform:scaleX(1.0122);">HID (Human Interface...</div>
<div class="t" style="left:619.80px;top:741.60px;transform:scaleX(0.8228);">Yes</div>
<div class="t" style="left:734.30px;top:741.60px;transform:scaleX(0.8228);">Yes</div>
<div class="t" style="left:848.24px;top:741.60px;transform:scaleX(1.0925);">No</div>
<div class="t" style="left:962.84px;top:741.60px;transform:scaleX(1.0925);">No</div>
<div class="t" style="left:1332.53px;top:741.60px;transform:scaleX(1.0148);">13/7/2023 7:56:21 ...</div>
<div class="t" style="left:1485.05px;top:741.60px;letter-spacing:.85px;">13/7/2</div>
<div class="bg g" style="top:762.21px"></div>
<svg class="dot" style="top:767.16px" viewBox="0 0 14 14"><circle cx="7" cy="7" r="6.45" fill="#00a000"/><circle cx="6.5" cy="6.5" r="5.6" fill="#00f000"/><ellipse cx="4.4" cy="4.2" rx="1.7" ry="1.15" transform="rotate(-38 4.4 4.2)" fill="#d8ffd8"/></svg>
<div class="t" style="left:27.95px;top:766.21px;transform:scaleX(0.9128);">USB Receiver</div>
<div class="t" style="left:198.97px;top:766.21px;transform:scaleX(0.9777);">USB Input Device</div>
<div class="t" style="left:427.74px;top:766.21px;transform:scaleX(1.0122);">HID (Human Interface...</div>
<div class="t" style="left:619.80px;top:766.21px;transform:scaleX(0.8228);">Yes</div>
<div class="t" style="left:734.30px;top:766.21px;transform:scaleX(0.8228);">Yes</div>
<div class="t" style="left:848.24px;top:766.21px;transform:scaleX(1.0925);">No</div>
<div class="t" style="left:962.84px;top:766.21px;transform:scaleX(1.0925);">No</div>
<div class="t" style="left:1332.53px;top:766.21px;transform:scaleX(1.0148);">13/7/2023 7:56:21 ...</div>
<div class="t" style="left:1485.05px;top:766.21px;letter-spacing:.85px;">13/7/2</div>
<div class="bg g" style="top:786.82px"></div>
<svg class="dot" style="top:791.77px" viewBox="0 0 14 14"><circle cx="7" cy="7" r="6.45" fill="#00a000"/><circle cx="6.5" cy="6.5" r="5.6" fill="#00f000"/><ellipse cx="4.4" cy="4.2" rx="1.7" ry="1.15" transform="rotate(-38 4.4 4.2)" fill="#d8ffd8"/></svg>
<div class="t" style="left:27.95px;top:790.82px;transform:scaleX(0.9128);">USB Receiver</div>
<div class="t" style="left:198.97px;top:790.82px;transform:scaleX(0.9777);">USB Input Device</div>
<div class="t" style="left:427.74px;top:790.82px;transform:scaleX(1.0122);">HID (Human Interface...</div>
<div class="t" style="left:619.80px;top:790.82px;transform:scaleX(0.8228);">Yes</div>
<div class="t" style="left:734.30px;top:790.82px;transform:scaleX(0.8228);">Yes</div>
<div class="t" style="left:848.24px;top:790.82px;transform:scaleX(1.0925);">No</div>
<div class="t" style="left:962.84px;top:790.82px;transform:scaleX(1.0925);">No</div>
<div class="t" style="left:1332.53px;top:790.82px;transform:scaleX(1.0148);">13/7/2023 7:56:21 ...</div>
<div class="t" style="left:1485.05px;top:790.82px;letter-spacing:.85px;">13/7/2</div>
<div class="bg s" style="top:811.43px"></div>
<svg class="dot" style="top:816.38px" viewBox="0 0 14 14"><circle cx="7" cy="7" r="6.45" fill="#0a8a58"/><circle cx="6.5" cy="6.5" r="5.6" fill="#10b46c"/><ellipse cx="4.4" cy="4.2" rx="1.7" ry="1.15" transform="rotate(-38 4.4 4.2)" fill="#a8e8d0"/></svg>
<div class="t w" style="left:27.79px;top:815.43px;transform:scaleX(0.9634);">DataTraveler 2.0</div>
<div class="t w" style="left:198.90px;top:815.43px;transform:scaleX(0.9614);">Kingston DataTraveler 2.0 USB ...</div>
<div class="t w" style="left:427.78px;top:815.43px;transform:scaleX(0.9768);">Mass Storage</div>
<div class="t w" style="left:619.80px;top:815.43px;transform:scaleX(0.8228);">Yes</div>
<div class="t w" style="left:734.30px;top:815.43px;transform:scaleX(0.8228);">Yes</div>
<div class="t w" style="left:848.24px;top:815.43px;transform:scaleX(1.0925);">No</div>
<div class="t w" style="left:962.84px;top:815.43px;transform:scaleX(1.0925);">No</div>
<div class="t w" style="left:1064.95px;top:815.43px;transform:scaleX(0.8362);">E:</div>
<div class="t w" style="left:1179.38px;top:815.43px;transform:scaleX(0.9543);">001D7D06CF09EEA...</div>
<div class="t w" style="left:1332.53px;top:815.43px;transform:scaleX(1.0160);">18/7/2023 10:08:5...</div>
<div class="t w" style="left:1485.05px;top:815.43px;letter-spacing:.85px;">18/7/2</div>
<div style="left:26.3px;top:811.63px;width:1500px;height:24.2px;border:1px dotted #c8935a"></div>
</div></div>
<div id="vs"></div><div id="vt"></div>
<div id="hsb"></div><div id="ht"></div>
<div id="stl"></div><div id="status"></div>
<div class="t" style="left:3.66px;top:873.15px;transform:scaleX(0.9799);">37 item(s), 1 Selected</div>
<div class="sb" style="left:383px"></div>
<div class="t" style="left:390.50px;top:872.30px;transform:scaleX(1.0453);color:#0000ff;font-weight:bold;">NirSoft Freeware.  http://www.nirsoft.net</div>
<div class="sb" style="left:701px"></div>
<div class="t" style="left:705.43px;top:873.15px;transform:scaleX(1.0274);">usb.ids is not loaded</div>
<svg style="left:1521px;top:883.4px" width="14" height="14" viewBox="0 0 14 14"><g fill="#bdbdbd"><rect x="9.5" y="1" width="2.2" height="2.2"/><rect x="9.5" y="5.2" width="2.2" height="2.2"/><rect x="5.3" y="5.2" width="2.2" height="2.2"/><rect x="9.5" y="9.4" width="2.2" height="2.2"/><rect x="5.3" y="9.4" width="2.2" height="2.2"/><rect x="1.1" y="9.4" width="2.2" height="2.2"/></g></svg>
<div id="menu"></div><div id="hl"></div>
<div class="t m" style="left:615.45px;top:149.20px;transform:scaleX(1.0043);">Create Desktop Shortcut</div>
<svg style="left:936px;top:150.90px" width="9" height="12" viewBox="0 0 9 12"><path d="M1.7 1.6L6.3 6L1.7 10.4" fill="none" stroke="#2a2a2a" stroke-width="1.4"/></svg>
<div class="t m" style="left:614.98px;top:178.83px;transform:scaleX(0.9725);">Disconnect Selected Devices</div>
<div class="t m" style="left:915.45px;top:178.83px;transform:scaleX(0.9554);">F9</div>
<div class="t m" style="left:615.08px;top:208.46px;transform:scaleX(0.9699);">Uninstall Selected Devices</div>
<div class="ms" style="top:236.06px"></div>
<div class="t m" style="left:614.99px;top:247.69px;transform:scaleX(0.9697);">Disable Selected Devices</div>
<div class="t m" style="left:915.45px;top:247.69px;transform:scaleX(0.9554);">F6</div>
<div class="t m" style="left:615.00px;top:277.32px;transform:scaleX(0.9576);">Enable Selected Devices</div>
<div class="t m" style="left:915.45px;top:277.32px;transform:scaleX(0.9615);">F7</div>
<div class="t m" style="left:614.98px;top:306.95px;transform:scaleX(0.9741);">Disable+Enable Selected Devices</div>
<div class="t m" style="left:915.47px;top:306.95px;transform:scaleX(0.9434);">F4</div>
<div class="ms" style="top:334.55px"></div>
<div class="t m" style="left:616.15px;top:346.18px;transform:scaleX(0.9933);">AutoPlay</div>
<div class="t m" style="left:915.45px;top:346.18px;transform:scaleX(0.9554);">F8</div>
<div class="t m" style="left:615.44px;top:375.81px;transform:scaleX(1.0161);">Open Drive</div>
<div class="t m" style="left:615.46px;top:405.44px;transform:scaleX(0.9864);">Open In RegEdit</div>
<div class="t m" style="left:615.47px;top:435.07px;transform:scaleX(0.9649);">Speed Test</div>
<div class="t m" style="left:890.19px;top:435.07px;transform:scaleX(1.0124);">Ctrl+T</div>
<div class="t m" style="left:615.46px;top:464.70px;transform:scaleX(0.9919);">Change Assigned Drive Letter</div>
<div class="t m" style="left:891.60px;top:464.70px;">Ctrl+L</div>
<div class="t m" style="left:615.47px;top:494.33px;transform:scaleX(0.9783);">Open INF File</div>
<div class="ms" style="top:521.93px"></div>
<div class="t m" style="left:615.45px;top:533.56px;transform:scaleX(0.9942);">Copy Selected Items</div>
<div class="t m" style="left:888.79px;top:533.56px;transform:scaleX(1.0120);">Ctrl+C</div>
<div class="t m" style="left:615.46px;top:563.19px;transform:scaleX(0.9846);">Copy Clicked Cell</div>
<div class="t m" style="left:614.93px;top:592.82px;transform:scaleX(1.0152);">HTML Report - All Items</div>
<div class="t m" style="left:614.96px;top:622.45px;transform:scaleX(0.9925);">HTML Report - Selected Items</div>
<div class="ms" style="top:650.05px"></div>
<div class="t m" style="left:615.45px;top:661.68px;transform:scaleX(0.9965);">Choose Columns</div>
<div class="t m" style="left:616.15px;top:691.31px;transform:scaleX(0.9945);">Auto Size Columns</div>
<div class="t m" style="left:870.80px;top:691.31px;">Ctrl+Plus</div>
<div class="ms" style="top:718.91px"></div>
<div class="t m" style="left:614.94px;top:730.54px;transform:scaleX(1.0060);">Properties</div>
<div class="t m" style="left:868.90px;top:730.54px;transform:scaleX(1.0129);">Alt+Enter</div>
<div class="t m" style="left:615.44px;top:760.17px;transform:scaleX(1.0074);">Open Device Properties Window</div>
<div class="t m" style="left:915.45px;top:760.17px;transform:scaleX(0.9615);">F2</div>
<div class="ms" style="top:787.77px"></div>
<div class="t m" style="left:615.00px;top:799.40px;transform:scaleX(0.9623);">Refresh</div>
<div class="t m" style="left:915.45px;top:799.40px;transform:scaleX(0.9554);">F5</div>
<svg style="left:450px;top:396px" width="152" height="106" viewBox="450 396 152 106"><path d="M452 439.2H561L520.6 398.4H549.4L600 449.4L549.4 500.4H520.6L561 459.5H452Z" fill="#ffcb65"/></svg>
</div></div></body></html>
